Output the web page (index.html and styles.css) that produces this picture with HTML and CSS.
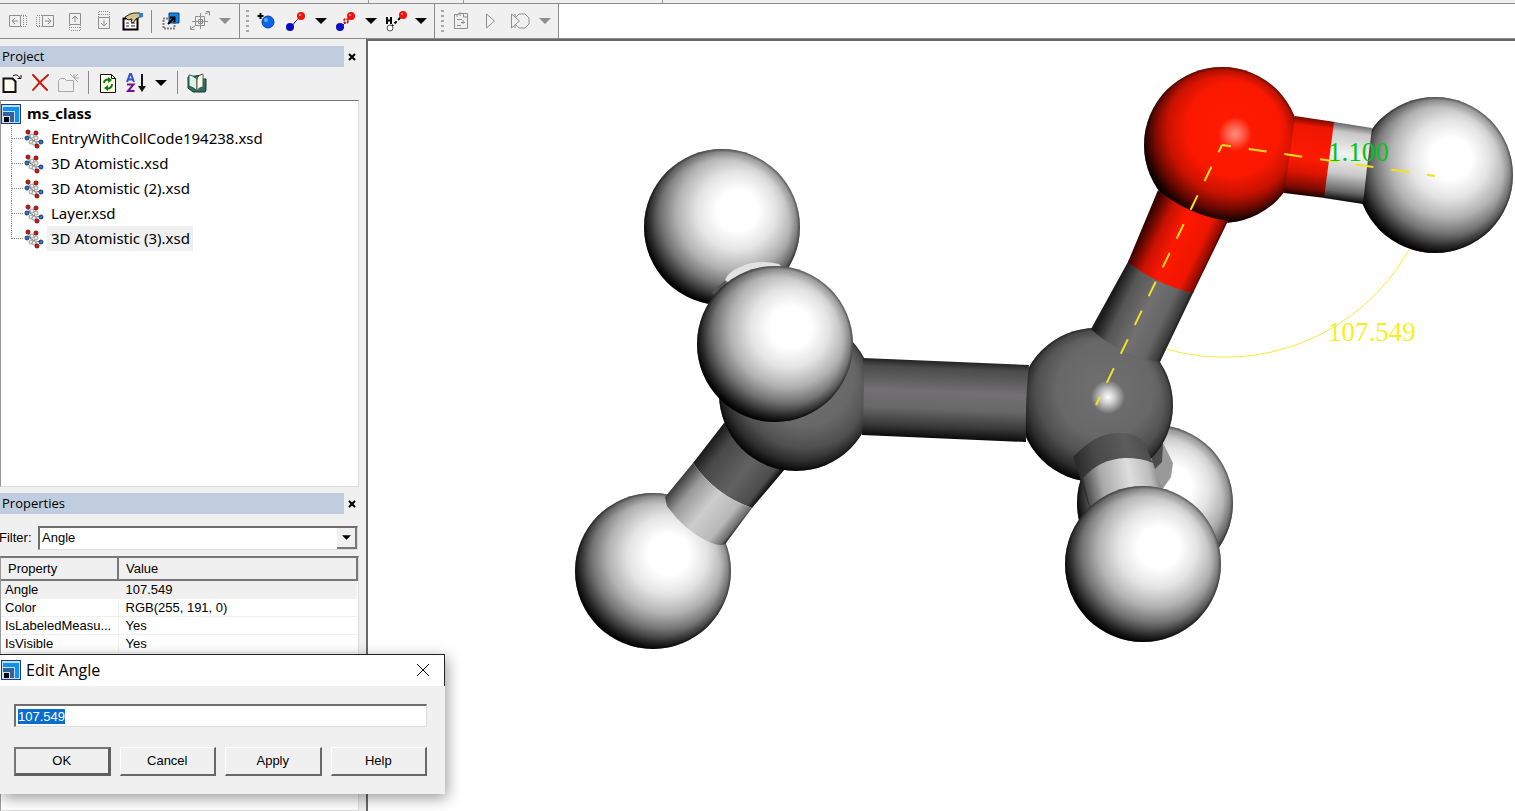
FILE: index.html
```html
<!DOCTYPE html>
<html lang="en">
<head>
    <meta charset="UTF-8">
    <meta name="viewport" content="width=device-width, initial-scale=1.0">
    <title>ms_class</title>
    <link rel="stylesheet" href="styles.css">
</head>
<body>
    <svg class="defs" width="0" height="0" aria-hidden="true">
        <symbol id="nudge" viewBox="0 0 24 24">
            <g fill="none" stroke="#8e8e8e">
                <path d="M4.500 6.500h11v11h-11zM13 12H7M10 9l-3 3l3 3"/>
                <path d="M16 6.500h5.500M16 17.500h5.500M18.500 7v10M21.500 7v10" stroke-dasharray="1 1"/>
            </g>
        </symbol>
        <symbol id="down" viewBox="0 0 12 6"><path d="M0 0h12l-6 6z" fill="currentColor"/></symbol>
        <symbol id="app" viewBox="0 0 20 20">
            <path d="M0 0h20v20H0z" fill="#1c3f7c"/>
            <path d="M1 1h18v18H1z" fill="#bfe0fa"/>
            <path d="M2 3h16v15h-4V7H2z" fill="#1290ee"/>
            <path d="M2 8h11v10H9v-6H2z" fill="#34609c"/>
            <path d="M3 13h5v5H3z" fill="#000"/>
        </symbol>
        <symbol id="atoms" viewBox="0 0 20 20">
            <path d="M4 3l2 6 6 4 5-1M12 4L6 9M12 13v5M7 15l5-5" stroke="#777" fill="none"/>
            <g fill="#eee" stroke="#999"><circle cx="8" cy="7" r="2"/><circle cx="12" cy="9" r="2"/><circle cx="7" cy="13" r="2"/><circle cx="10" cy="14" r="2"/></g>
            <g fill="#d6180c" stroke="#7a1008"><circle cx="4" cy="3" r="2"/><circle cx="12" cy="4" r="2"/><circle cx="13" cy="17" r="2"/></g>
            <g fill="#2f73c8" stroke="#173d7a"><circle cx="3" cy="9" r="2"/><circle cx="17" cy="13" r="2"/></g>
        </symbol>
    </svg>

    <header class="toolbars">
        <div class="strip"><span></span><span></span><span></span></div>
        <div class="bar-row">
            <div class="bar bar-first">
                <button class="tool" aria-label="Move left"><svg class="ico"><use href="#nudge"/></svg></button>
                <button class="tool" aria-label="Move right"><svg class="ico flip"><use href="#nudge"/></svg></button>
                <button class="tool" aria-label="Move up"><svg class="ico up"><use href="#nudge"/></svg></button>
                <button class="tool" aria-label="Move down"><svg class="ico turn"><use href="#nudge"/></svg></button>
                <button class="tool" aria-label="Properties">
                    <svg class="ico" viewBox="0 0 24 24">
                        <path d="M2.500 9.500h14v11h-14z" fill="#fffbe0" stroke="#000" stroke-width="2"/>
                        <path d="M5 14h3M10 14h4M5 17h3M10 17h4" stroke="#1a1a9c"/>
                        <path d="M4 8l5-3 4-1h6v4l-4 2-3 4-2-1 1-3-4 1z" fill="#d9c38c" stroke="#222"/>
                        <path d="M18 4h4v4l-4 1z" fill="#2c7fe0"/>
                    </svg>
                </button>
                <i class="sep"></i>
                <button class="tool" aria-label="Fit view">
                    <svg class="ico" viewBox="0 0 24 24">
                        <path d="M4.500 9.500h11v10h-11z" fill="none" stroke="#111" stroke-width="2" stroke-dasharray="1 2"/>
                        <path d="M10 4h10v10H10z" fill="#0b86ee" stroke="#123a6a"/>
                        <path d="M9 15l6-6M11 8.500h4.500V13" fill="none" stroke="#000" stroke-width="2"/>
                    </svg>
                </button>
                <button class="tool" aria-label="Grid">
                    <svg class="ico" viewBox="0 0 24 24" fill="none" stroke="#8e8e8e">
                        <path d="M7.500 7.500h9v9h-9zM12.500 4v16M4 12.500h16M10.500 10.500h4v4h-4zM2 20l5-3M2.500 17v3.500h4M17 5l4-2M18 2.500h3.500v4"/>
                    </svg>
                </button>
                <button class="drop off" aria-label="Grid options"><svg><use href="#down"/></svg></button>
            </div>
            <div class="bar">
                <i class="grip"></i>
                <button class="tool" aria-label="Add atom">
                    <svg class="ico" viewBox="0 0 24 24">
                        <circle cx="13" cy="13" r="6" fill="#0d66ea" stroke="#0a3fa6"/><circle cx="11" cy="11" r="2" fill="#56b4ff"/>
                        <path d="M5.500 4v6M2.500 7h6" stroke="#000" stroke-width="2"/>
                    </svg>
                </button>
                <button class="tool" aria-label="Sketch atom">
                    <svg class="ico" viewBox="0 0 24 24">
                        <path d="M7 18L12 12" stroke="#1414c8"/><path d="M12 12L18 6" stroke="#e01010"/>
                        <circle cx="6" cy="18" r="4" fill="#0a0ac0"/><circle cx="17" cy="7" r="4" fill="#f0140c"/><circle cx="16" cy="6" r="1" fill="#ff9c90"/>
                    </svg>
                </button>
                <button class="drop" aria-label="Sketch options"><svg><use href="#down"/></svg></button>
                <button class="tool" aria-label="Sketch fragment">
                    <svg class="ico" viewBox="0 0 24 24">
                        <path d="M7 18L11 14" stroke="#1414c8"/><path d="M14 11L18 7" stroke="#e01010"/>
                        <circle cx="12" cy="12" r="2" fill="#fff" stroke="#d01010" stroke-width="2" stroke-dasharray="2 1"/>
                        <circle cx="6" cy="18" r="4" fill="#0a0ac0"/><circle cx="17" cy="7" r="4" fill="#f0140c"/><circle cx="16" cy="6" r="1" fill="#ff9c90"/>
                    </svg>
                </button>
                <button class="drop" aria-label="Fragment options"><svg><use href="#down"/></svg></button>
                <button class="tool" aria-label="Adjust hydrogen">
                    <svg class="ico" viewBox="0 0 24 24">
                        <path d="M3 8v7M7 8v7M3 11.500h4" stroke="#000" stroke-width="2"/>
                        <path d="M7 18L18 7" stroke="#000" stroke-width="2" stroke-dasharray="3 2"/>
                        <circle cx="6" cy="19" r="3" fill="#fff" stroke="#555"/><circle cx="19" cy="6" r="4" fill="#f0140c"/><circle cx="18" cy="5" r="1" fill="#ff9c90"/>
                    </svg>
                </button>
                <button class="drop" aria-label="Hydrogen options"><svg><use href="#down"/></svg></button>
            </div>
            <div class="bar">
                <i class="grip"></i>
                <button class="tool" aria-label="Script">
                    <svg class="ico" viewBox="0 0 24 24" fill="none" stroke="#909090">
                        <path d="M4.500 5.500h4v-1h9v15h-13zM7 5v3M10 3v4M13.500 4v4h4M7 10.500h5M11 13.500h4M7 16.500h4M13 11v4"/>
                    </svg>
                </button>
                <button class="tool" aria-label="Run"><svg class="ico" viewBox="0 0 24 24" fill="none" stroke="#909090"><path d="M7.500 5v14l8-7z"/></svg></button>
                <button class="tool" aria-label="Run on server">
                    <svg class="ico" viewBox="0 0 24 24" fill="none" stroke="#909090"><path d="M3.500 5v14l8-7zM7 8V5M7 16v3"/><path d="M8 8l3-3h6l4 4v6l-4 4h-6l-3-3"/></svg>
                </button>
                <button class="drop off" aria-label="Run options"><svg><use href="#down"/></svg></button>
            </div>
        </div>
    </header>

    <main class="workspace">
        <aside class="sidebar">
            <section class="panel project">
                <div class="panel-head"><h2>Project</h2><button aria-label="Close Project"><svg viewBox="0 0 8 8"><path d="M1 1l6 6M7 1L1 7"/></svg></button></div>
                <div class="mini-bar">
                    <button class="tool" aria-label="New document">
                        <svg class="ico" viewBox="0 0 24 24">
                            <path d="M3.500 7.500h9l3 3v10.500h-12z" fill="#fffff0" stroke="#111" stroke-width="2"/>
                            <path d="M13 5c3-2 6-1 7 3M17.500 7.500H21V4" fill="none" stroke="#111"/>
                        </svg>
                    </button>
                    <button class="tool" aria-label="Delete">
                        <svg class="ico" viewBox="0 0 24 24" fill="none" stroke="#c81e08" stroke-width="2" stroke-linecap="round"><path d="M5 4c4 4 8 9 14 15M20 4C14 9 9 14 5 19"/></svg>
                    </button>
                    <button class="tool" aria-label="New folder">
                        <svg class="ico" viewBox="0 0 24 24" fill="none" stroke="#a8a8a8"><path d="M2.500 20.500v-11l2-2h4l2 2h7v11zM18 7V3M18 7l4-4M18 7h5M18 7l-4-4M18 7l4 4"/></svg>
                    </button>
                    <i class="sep"></i>
                    <button class="tool" aria-label="Refresh">
                        <svg class="ico" viewBox="0 0 24 24">
                            <path d="M4.500 3.500h11l4 4v14h-15z" fill="#ffffe6" stroke="#111"/><path d="M15.500 3.500v4h4" fill="none" stroke="#111"/>
                            <g fill="none" stroke="#0a7c1c" stroke-width="2"><path d="M8 12c0-3 3-4 6-3"/><path d="M16 13c0 4-3 5-6 4"/></g>
                            <path d="M12 6l4 3-4 3zM12 14l-4 3 4 3z" fill="#0a7c1c"/>
                        </svg>
                    </button>
                    <button class="tool" aria-label="Sort">
                        <svg class="ico" viewBox="0 0 24 24" fill="none" stroke-width="2">
                            <path d="M3 11l3-8h1l3 8M4 8.500h5" stroke="#2d52d0"/>
                            <path d="M3 13.500h6.500L4 20h6.500" stroke="#7a1088"/>
                            <path d="M18 3v14" stroke="#111"/><path d="M14 15h8l-4 6z" fill="#111"/>
                        </svg>
                    </button>
                    <button class="drop" aria-label="Sort options"><svg><use href="#down"/></svg></button>
                    <i class="sep"></i>
                    <button class="tool" aria-label="Explorer">
                        <svg class="ico" viewBox="0 0 24 24">
                            <path d="M3 6v11l5 4h12l1-2V8h-4V4z" fill="#2c6f5c" stroke="#153c32"/>
                            <path d="M4 4c3 0 5 2 8 4v12c-3-3-5-4-8-5z" fill="#dff2e6" stroke="#2c5a4c"/>
                            <path d="M12 8c1-3 3-4 6-5v13c-3 0-5 2-6 4z" fill="#fffde8" stroke="#555"/>
                        </svg>
                    </button>
                </div>
                <div class="tree">
                    <div class="tree-root"><svg class="file-ico"><use href="#app"/></svg>ms_class</div>
                    <ul>
                        <li><svg class="file-ico"><use href="#atoms"/></svg><span>EntryWithCollCode194238.xsd</span></li>
                        <li><svg class="file-ico"><use href="#atoms"/></svg><span>3D Atomistic.xsd</span></li>
                        <li><svg class="file-ico"><use href="#atoms"/></svg><span>3D Atomistic (2).xsd</span></li>
                        <li><svg class="file-ico"><use href="#atoms"/></svg><span>Layer.xsd</span></li>
                        <li><svg class="file-ico"><use href="#atoms"/></svg><span class="current">3D Atomistic (3).xsd</span></li>
                    </ul>
                </div>
            </section>

            <section class="panel properties">
                <div class="panel-head"><h2>Properties</h2><button aria-label="Close Properties"><svg viewBox="0 0 8 8"><path d="M1 1l6 6M7 1L1 7"/></svg></button></div>
                <div class="filter">
                    <label for="filter">Filter:</label>
                    <div class="select-box">
                        <select id="filter"><option>Angle</option></select>
                        <span class="select-arrow"><svg><use href="#down"/></svg></span>
                    </div>
                </div>
                <div class="grid-box">
                    <table>
                        <thead><tr><th>Property</th><th>Value</th></tr></thead>
                        <tbody>
                            <tr class="current"><td>Angle</td><td>107.549</td></tr>
                            <tr><td>Color</td><td>RGB(255, 191, 0)</td></tr>
                            <tr><td>IsLabeledMeasu...</td><td>Yes</td></tr>
                            <tr><td>IsVisible</td><td>Yes</td></tr>
                        </tbody>
                    </table>
                </div>
            </section>
        </aside>

        <section class="viewer">
            <svg class="molecule" viewBox="368 41 1147 770" preserveAspectRatio="xMinYMin meet" role="img" aria-label="Ethanol molecule">
                <defs>
                    <radialGradient id="gH" cx=".57" cy=".41" r=".6" fx=".61" fy=".39">
                        <stop offset="0" stop-color="#fff"/><stop offset=".22" stop-color="#fff"/><stop offset=".42" stop-color="#e4e4e4"/>
                        <stop offset=".62" stop-color="#b2b2b2"/><stop offset=".78" stop-color="#747474"/><stop offset=".91" stop-color="#303030"/><stop offset="1" stop-color="#040404"/>
                    </radialGradient>
                    <radialGradient id="gC" cx=".56" cy=".4" r=".62">
                        <stop offset="0" stop-color="#707070"/><stop offset=".5" stop-color="#686868"/><stop offset=".72" stop-color="#505050"/><stop offset=".88" stop-color="#2a2a2a"/><stop offset="1" stop-color="#040404"/>
                    </radialGradient>
                    <radialGradient id="gO" cx=".57" cy=".4" r=".6">
                        <stop offset="0" stop-color="#ff1c00"/><stop offset=".5" stop-color="#fa1800"/><stop offset=".7" stop-color="#c81200"/><stop offset=".87" stop-color="#640800"/><stop offset="1" stop-color="#0c0000"/>
                    </radialGradient>
                    <radialGradient id="rim">
                        <stop offset=".86" stop-color="#000" stop-opacity="0"/><stop offset=".96" stop-color="#000" stop-opacity=".16"/><stop offset="1" stop-color="#000" stop-opacity=".5"/>
                    </radialGradient>
                    <radialGradient id="shine"><stop offset="0" stop-color="#fff"/><stop offset=".4" stop-color="#fff" stop-opacity=".65"/><stop offset="1" stop-color="#fff" stop-opacity="0"/></radialGradient>
                    <linearGradient id="bCC" gradientUnits="userSpaceOnUse" x1="946" y1="361" x2="943" y2="439">
                        <stop offset="0" stop-color="#202020"/><stop offset=".1" stop-color="#4c4c4c"/><stop offset=".4" stop-color="#727072"/><stop offset=".62" stop-color="#686868"/><stop offset=".85" stop-color="#383838"/><stop offset="1" stop-color="#080808"/>
                    </linearGradient>
                    <linearGradient id="bCO" gradientUnits="userSpaceOnUse" x1="1128" y1="262" x2="1195" y2="294">
                        <stop offset="0" stop-color="#1c1c1c"/><stop offset=".2" stop-color="#565656"/><stop offset=".5" stop-color="#727072"/><stop offset=".75" stop-color="#666"/><stop offset=".92" stop-color="#3c3c3c"/><stop offset="1" stop-color="#0c0c0c"/>
                    </linearGradient>
                    <linearGradient id="bOC" gradientUnits="userSpaceOnUse" x1="1128" y1="262" x2="1195" y2="294">
                        <stop offset="0" stop-color="#3c0400"/><stop offset=".22" stop-color="#c81200"/><stop offset=".45" stop-color="#ff1800"/><stop offset=".78" stop-color="#ee1600"/><stop offset=".94" stop-color="#8a0c00"/><stop offset="1" stop-color="#1e0000"/>
                    </linearGradient>
                    <linearGradient id="bOH" gradientUnits="userSpaceOnUse" x1="1314" y1="119" x2="1304" y2="196">
                        <stop offset="0" stop-color="#7a0a00"/><stop offset=".1" stop-color="#ee1600"/><stop offset=".5" stop-color="#ff1a00"/><stop offset=".7" stop-color="#dc1400"/><stop offset=".9" stop-color="#7a0a00"/><stop offset="1" stop-color="#140000"/>
                    </linearGradient>
                    <linearGradient id="bHO" gradientUnits="userSpaceOnUse" x1="1353" y1="124" x2="1343" y2="201">
                        <stop offset="0" stop-color="#606060"/><stop offset=".12" stop-color="#c8c8c8"/><stop offset=".4" stop-color="#f2f2f2"/><stop offset=".65" stop-color="#cacaca"/><stop offset=".88" stop-color="#686868"/><stop offset="1" stop-color="#080808"/>
                    </linearGradient>
                    <linearGradient id="bCH" gradientUnits="userSpaceOnUse" x1="693" y1="463" x2="752" y2="510">
                        <stop offset="0" stop-color="#1a1a1a"/><stop offset=".2" stop-color="#484848"/><stop offset=".6" stop-color="#626262"/><stop offset=".9" stop-color="#4c4c4c"/><stop offset="1" stop-color="#080808"/>
                    </linearGradient>
                    <linearGradient id="bHC" gradientUnits="userSpaceOnUse" x1="680" y1="480" x2="739" y2="528">
                        <stop offset="0" stop-color="#404040"/><stop offset=".2" stop-color="#989898"/><stop offset=".5" stop-color="#cdcdcd"/><stop offset=".8" stop-color="#b8b8b8"/><stop offset=".95" stop-color="#6c6c6c"/><stop offset="1" stop-color="#101010"/>
                    </linearGradient>
                    <linearGradient id="bFrontC" gradientUnits="userSpaceOnUse" x1="1073" y1="470" x2="1153" y2="450">
                        <stop offset="0" stop-color="#242424"/><stop offset=".3" stop-color="#484848"/><stop offset=".7" stop-color="#5c5c5c"/><stop offset="1" stop-color="#4a4a4a"/>
                    </linearGradient>
                    <linearGradient id="bFrontH" gradientUnits="userSpaceOnUse" x1="1083" y1="490" x2="1162" y2="474">
                        <stop offset="0" stop-color="#3a3a3a"/><stop offset=".25" stop-color="#a8a8a8"/><stop offset=".6" stop-color="#dedede"/><stop offset=".85" stop-color="#bcbcbc"/><stop offset="1" stop-color="#777"/>
                    </linearGradient>
                </defs>

                <!-- methyl side -->
                <path d="M724 423L693 463Q715 495 752 508L785 469L770 430Z" fill="url(#bCH)"/>
                <circle cx="796" cy="394" r="77" fill="url(#gC)"/>
                <circle cx="796" cy="394" r="77" fill="url(#rim)"/>
                <circle cx="722" cy="227" r="78" fill="url(#gH)"/>
                <circle cx="722" cy="227" r="78" fill="url(#rim)"/>
                <path d="M712 293L716 288L726 280L724 300Z" fill="#555"/>
                <path d="M725 280Q728 272 740 267Q757 259 779 264L784 270L740 290Z" fill="#e2e2e2"/>
                <circle cx="775" cy="344" r="78" fill="url(#gH)"/>
                <circle cx="775" cy="344" r="78" fill="url(#rim)"/>
                <circle cx="653" cy="571" r="78" fill="url(#gH)"/>
                <circle cx="653" cy="571" r="78" fill="url(#rim)"/>
                <path d="M693 463Q715 495 752 508L726 543Q722 548 707 541Q684 530 667 506L665 497Z" fill="url(#bHC)"/>

                <!-- hydroxyl side -->
                <circle cx="1155" cy="503" r="78" fill="url(#gH)"/>
                <circle cx="1155" cy="503" r="78" fill="url(#rim)"/>
                <path d="M1163 443L1173 463L1171 477L1162 490L1150 465Z" fill="#999"/>
                <path d="M1150 450L1163 443L1162 462L1154 470Z" fill="#4c4c4c"/>
                <circle cx="1096" cy="405" r="77" fill="url(#gC)"/>
                <circle cx="1096" cy="405" r="77" fill="url(#rim)"/>
                <path d="M863 358L1029 365Q1025 400 1026 442L862 435Q865 400 863 358Z" fill="url(#bCC)"/>
                <circle cx="1222" cy="145" r="78" fill="url(#gO)"/>
                <circle cx="1222" cy="145" r="78" fill="url(#rim)"/>
                <path d="M1129 260L1091 329Q1120 356 1160 362L1194 291Q1155 280 1129 260Z" fill="url(#bCO)"/>
                <path d="M1158 190Q1188 215 1228 221L1193 293Q1155 284 1128 262Z" fill="url(#bOC)"/>
                <path d="M1295 116L1335 122L1325 198L1284 193Q1290 155 1295 116Z" fill="url(#bOH)"/>
                <circle cx="1435" cy="175" r="78" fill="url(#gH)"/>
                <circle cx="1435" cy="175" r="78" fill="url(#rim)"/>
                <path d="M1334 122L1372 128Q1367 165 1363 204L1324 198Z" fill="url(#bHO)"/>
                <path d="M1073 457Q1095 434 1116 433Q1136 432 1144 442L1153 463L1140 480L1090 510L1080 477Z" fill="url(#bFrontC)"/>
                <path d="M1083 478Q1100 459 1125 458Q1142 458 1153 463L1163 492L1130 515L1090 508Z" fill="url(#bFrontH)"/>
                <circle cx="1143" cy="564" r="78" fill="url(#gH)"/>
                <circle cx="1143" cy="564" r="78" fill="url(#rim)"/>
                <circle cx="1108" cy="397" r="17" fill="url(#shine)"/>
                <circle cx="1235" cy="134" r="17" fill="url(#shine)" opacity=".5"/>

                <!-- measurements -->
                <g class="measure">
                    <path d="M1222 145L1096 405" stroke-dasharray="16 16" stroke-dashoffset="8"/>
                    <path d="M1222 145L1435 176" stroke-dasharray="18 18" stroke-dashoffset="9"/>
                    <path class="arc" d="M1166 349A212 212 0 0 0 1409 250"/>
                </g>
                <text class="distance" x="1328" y="161">1.100</text>
                <text class="angle" x="1328" y="341">107.549</text>
            </svg>
        </section>
    </main>

    <form class="dialog" role="dialog" aria-labelledby="dialogTitle">
        <div class="dialog-head">
            <svg class="file-ico"><use href="#app"/></svg>
            <h2 id="dialogTitle">Edit Angle</h2>
            <button type="button" aria-label="Close"><svg viewBox="0 0 12 12"><path d="M0 0l12 12M12 0L0 12"/></svg></button>
        </div>
        <div class="dialog-body">
            <input type="text" id="angleValue" aria-label="Angle" value="107.549">
            <div class="dialog-buttons">
                <button type="submit" class="default">OK</button>
                <button type="button">Cancel</button>
                <button type="button">Apply</button>
                <button type="button">Help</button>
            </div>
        </div>
    </form>

    <script>
        const angleInput = document.getElementById('angleValue');
        angleInput.focus();
        angleInput.select();

        document.querySelector('.dialog').addEventListener('submit', function(event) {
            event.preventDefault();
        });
    </script>
</body>
</html>
```
FILE: styles.css
```css
* {
    box-sizing: border-box;
}
body {
    margin: 0;
    height: 100vh;
    display: flex;
    flex-direction: column;
    overflow: hidden;
    background: #f0f0f0;
    color: #000;
    font: 13px/18px "Liberation Sans", Arial, sans-serif;
}
button {
    padding: 0;
    border: 0;
    background: none;
    color: #000;
    font: inherit;
}
h2 {
    margin: 0;
    font-weight: normal;
}
.defs {
    position: absolute;
}

/* toolbars */
.strip {
    display: flex;
    height: 3px;
    background: #f0f0f0;
}
.strip span {
    border-right: 1px solid #999;
    flex: 0 0 369px;
}
.strip span + span {
    flex-basis: 95px;
}
.strip span + span + span {
    flex-basis: 199px;
}
.bar-row {
    display: flex;
    height: 36px;
    background: #fff;
    border-top: 1px solid #8c8c8c;
    border-bottom: 1px solid #8c8c8c;
}
.bar {
    display: flex;
    align-items: center;
    padding-right: 3px;
    background: #f0f0f0;
    border-right: 1px solid #8c8c8c;
}
.bar-first {
    padding: 0 4px 0 2px;
}
.tool {
    display: flex;
    justify-content: center;
    align-items: center;
    width: 29px;
    height: 28px;
}
.ico {
    width: 24px;
    height: 24px;
}
.flip {
    transform: rotate(180deg);
}
.up {
    transform: rotate(90deg);
}
.turn {
    transform: rotate(270deg);
}
.drop {
    display: flex;
    justify-content: center;
    align-items: center;
    width: 21px;
    height: 28px;
}
.drop svg {
    width: 12px;
    height: 6px;
}
.off {
    color: #8e8e8e;
}
.sep {
    width: 1px;
    height: 23px;
    margin: 0 4px;
    background: #8c8c8c;
}
.grip {
    width: 3px;
    height: 23px;
    margin: 0 3px 0 6px;
    background: repeating-linear-gradient(#a8a8a8 0 2px, transparent 2px 5px);
}

/* side panels */
.workspace {
    flex: 1;
    display: flex;
    min-height: 0;
}
.sidebar {
    flex: 0 0 368px;
    display: flex;
    flex-direction: column;
    padding: 7px 7px 0 0;
    border-right: 2px solid #686868;
}
.panel {
    display: flex;
    flex-direction: column;
    min-height: 0;
}
.project {
    flex: 447 0 0;
}
.properties {
    flex: 318 0 0;
}
.panel-head {
    display: flex;
    align-items: center;
    height: 21px;
}
.panel-head h2 {
    flex: 1;
    padding-left: 2px;
    background: #bfcddf;
    font: 13px/21px "Open Sans", sans-serif;
}
.panel-head button {
    display: flex;
    justify-content: center;
    width: 16px;
    margin-right: -1px;
}
.panel-head svg {
    width: 8px;
    height: 8px;
    fill: none;
    stroke: #000;
    stroke-width: 2;
}
.mini-bar {
    display: flex;
    align-items: center;
    height: 33px;
    margin-left: -2px;
    padding-bottom: 2px;
}
.mini-bar .tool {
    width: 28px;
}
.mini-bar .sep {
    margin: 0 5px 0 6px;
}
.tree {
    flex: 1;
    margin-bottom: 6px;
    background: #fff;
    border: 1px solid #dcdcdc;
    border-top: 1px solid #777;
    border-left-color: #999;
    font: 15px/25px "Noto Sans", "Open Sans", sans-serif;
}
.tree-root {
    display: flex;
    align-items: center;
    gap: 6px;
    height: 25px;
    font-weight: bold;
}
.file-ico {
    flex: none;
    width: 20px;
    height: 20px;
}
.tree ul {
    list-style: none;
    margin: 0;
    padding: 0;
}
.tree li {
    display: flex;
    align-items: center;
    gap: 3px;
    height: 25px;
    padding-left: 10px;
}
.tree li::before {
    content: "";
    align-self: flex-start;
    width: 12px;
    height: 25px;
    margin-right: -3px;
    border-left: 1px dotted #888;
    background: repeating-linear-gradient(90deg, #888 0 1px, transparent 1px 2px) 0 12px / 12px 1px no-repeat;
}
.tree li:last-child::before {
    height: 13px;
}
.tree li span {
    padding: 0 3px 0 4px;
}
.tree .current {
    background: #f0f0f0;
}

/* property grid */
.filter {
    display: flex;
    align-items: center;
    height: 42px;
    padding-top: 5px;
}
.filter label {
    width: 39px;
    margin-left: -1px;
}
.select-box {
    position: relative;
    flex: 1;
    margin-right: 1px;
    border: 1px solid #ddd;
    border-top: 2px solid #6e6e6e;
    border-left: 2px solid #6e6e6e;
    background: #fff;
}
.select-box select {
    display: block;
    width: 100%;
    height: 21px;
    padding: 0 2px;
    border: 0;
    appearance: none;
    background: #fff;
    color: #000;
    font: inherit;
}
.select-arrow {
    position: absolute;
    top: 0;
    right: 0;
    display: flex;
    justify-content: center;
    align-items: center;
    width: 20px;
    height: 21px;
    background: #f0f0f0;
    border-right: 2px solid #777;
    border-bottom: 2px solid #777;
    pointer-events: none;
}
.select-arrow svg {
    width: 9px;
    height: 5px;
}
.grid-box {
    flex: 1;
    background: #fff;
    border: 1px solid #dcdcdc;
    border-top: 2px solid #777;
    border-left-color: #999;
}
.grid-box table {
    width: 100%;
    border-collapse: collapse;
    table-layout: fixed;
}
.grid-box th {
    height: 22px;
    padding: 0 0 0 7px;
    background: #f0f0f0;
    border-right: 2px solid #777;
    border-bottom: 2px solid #777;
    font-weight: normal;
    text-align: left;
}
.grid-box th:first-child {
    width: 117px;
}
.grid-box td {
    height: 18px;
    padding: 0 0 0 7px;
    border-bottom: 1px solid #f0f0f0;
    line-height: 17px;
    white-space: nowrap;
}
.grid-box td:first-child {
    padding-left: 4px;
    border-right: 1px solid #f0f0f0;
}
.grid-box .current td {
    background: #f0f0f0;
}

/* 3D view */
.viewer {
    flex: 1;
    min-width: 0;
    background: #fff;
    border-top: 2px solid #686868;
}
.molecule {
    display: block;
    width: 100%;
    height: 100%;
}
.measure path {
    fill: none;
    stroke: #f5e11e;
    stroke-width: 2;
}
.measure .arc {
    stroke: #f8ea3c;
    stroke-width: 1;
}
.molecule text {
    font: 27px "Liberation Serif", serif;
}
.distance {
    fill: #00c814;
}
.angle {
    fill: #f8ee20;
}

/* dialog */
.dialog {
    position: absolute;
    top: 654px;
    left: 0;
    width: 445px;
    background: #f0f0f0;
    border-top: 1px solid #222;
    box-shadow: 2px 4px 14px rgba(0, 0, 0, 0.4);
}
.dialog-head {
    display: flex;
    align-items: center;
    height: 31px;
    padding: 0 15px 2px 1px;
    background: #fff;
    border-right: 1px solid #222;
}
.dialog-head h2 {
    flex: 1;
    padding-left: 5px;
    font: 16px/28px "Open Sans", "Noto Sans", sans-serif;
}
.dialog-head button svg {
    display: block;
    width: 12px;
    height: 12px;
    fill: none;
    stroke: #000;
    overflow: visible;
}
.dialog-body {
    padding: 18px 18px 18px 14px;
}
.dialog-body input {
    display: block;
    width: 100%;
    height: 23px;
    padding: 0 2px;
    border: 1px solid #ddd;
    border-top: 2px solid #6e6e6e;
    border-left: 2px solid #6e6e6e;
    outline: 0;
    background: #fff;
    color: #000;
    font: inherit;
}
.dialog-body input::selection {
    background: #0a6cce;
    color: #fff;
}
.dialog-buttons {
    display: grid;
    grid-template-columns: repeat(4, 1fr);
    gap: 9px;
    margin-top: 20px;
}
.dialog-buttons button {
    height: 29px;
    border: 1px solid #fff;
    border-right: 2px solid #686868;
    border-bottom: 2px solid #686868;
}
.dialog-buttons .default {
    border: 2px solid #777;
    border-right: 3px solid #606060;
    border-bottom: 3px solid #606060;
}
```
